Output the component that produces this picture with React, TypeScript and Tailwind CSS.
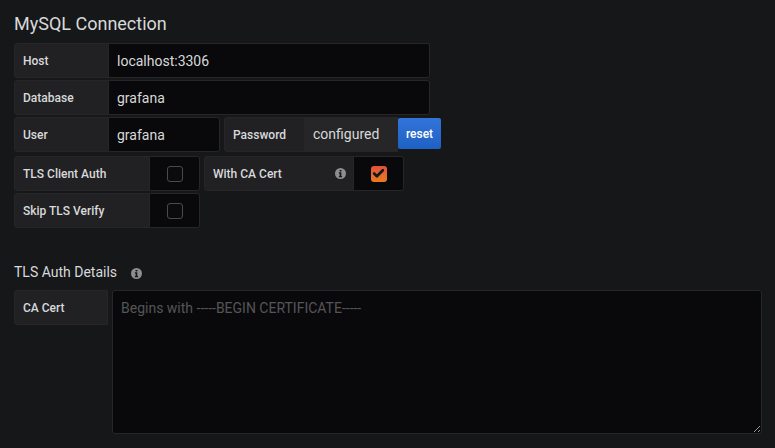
import React from 'react';
import { Check } from 'lucide-react';

const InfoIcon = () => (
  <svg viewBox="0 0 1024 1024" className="w-[11px] h-[11px]" fill="#8e8e8e">
    <circle cx="512" cy="512" r="512" />
    <rect x="440" y="180" width="150" height="140" rx="20" fill="#161719" />
    <path d="M360 400h230v340h70v110H360V740h70V510h-70z" fill="#161719" />
  </svg>
);

const Label: React.FC<{ className?: string; children: React.ReactNode }> = ({ className = '', children }) => (
  <div className={`flex items-center h-[35px] pl-[8px] bg-[#212124] border border-[#262628] rounded-l-[3px] text-[12px] font-medium text-[#d8d9da] shrink-0 ${className}`}>
    {children}
  </div>
);

const TextInput: React.FC<{ value: string; className?: string }> = ({ value, className = '' }) => (
  <input
    readOnly
    value={value}
    className={`h-[35px] pl-[8px] bg-[#09090b] border border-l-0 border-[#262628] rounded-r-[3px] text-[14px] text-[#d8d9da] outline-none ${className}`}
  />
);

const CheckBox: React.FC<{ checked?: boolean }> = ({ checked }) => (
  <div className="flex items-center justify-center w-[50px] h-[35px] bg-[#09090b] border border-l-0 border-[#262628] rounded-r-[3px]">
    {checked ? (
      <div className="flex items-center justify-center w-[16px] h-[16px] rounded-[3px] bg-gradient-to-b from-[#e0513a] to-[#eb7b18]">
        <Check className="w-[13px] h-[13px] text-[#161719]" strokeWidth={5} />
      </div>
    ) : (
      <div className="w-[16px] h-[16px] rounded-[3px] bg-[#0b0b0d] border border-[#4a4a4d]" />
    )}
  </div>
);

export default function App() {
  return (
    <div className="w-[775px] h-[448px] overflow-hidden bg-[#161719] pl-[14px] pt-[13px] font-['Roboto',sans-serif]">
      <h3 className="text-[18px] leading-[21px] text-[#d8d9da] mb-[9px]">MySQL Connection</h3>

      <div className="flex flex-col gap-[2px]">
        <div className="flex">
          <Label className="w-[95px]">Host</Label>
          <TextInput value="localhost:3306" className="w-[321px]" />
        </div>
        <div className="flex">
          <Label className="w-[95px]">Database</Label>
          <TextInput value="grafana" className="w-[321px]" />
        </div>
        <div className="flex">
          <Label className="w-[95px]">User</Label>
          <TextInput value="grafana" className="w-[111px]" />
          <Label className="w-[81px] ml-[4px]">Password</Label>
          <div className="flex items-center w-[93px] h-[35px] pl-[8px] bg-[#262628] text-[14px] text-[#d8d9da]">configured</div>
          <button className="w-[43px] h-[31px] mt-[1px] rounded-[2px] bg-gradient-to-b from-[#3274d9] to-[#1f60c4] text-[12px] font-medium text-white">
            reset
          </button>
        </div>
      </div>

      <div className="flex mt-[4px]">
        <Label className="w-[136px]">TLS Client Auth</Label>
        <CheckBox />
        <Label className="w-[150px] ml-[4px]">
          With CA Cert
          <span className="ml-[53px]"><InfoIcon /></span>
        </Label>
        <CheckBox checked />
      </div>
      <div className="flex mt-[2px]">
        <Label className="w-[136px]">Skip TLS Verify</Label>
        <CheckBox />
      </div>

      <div className="flex items-center mt-[35px] h-[18px] text-[14px] text-[#d8d9da]">
        TLS Auth Details
        <span className="ml-[14px] mt-[3px]"><InfoIcon /></span>
      </div>

      <div className="flex items-start mt-[9px]">
        <Label className="w-[94px]">CA Cert</Label>
        <textarea
          readOnly
          placeholder="Begins with -----BEGIN CERTIFICATE-----"
          className="ml-[4px] w-[650px] h-[144px] px-[8px] py-[8px] bg-[#09090b] border border-[#262628] rounded-[3px] text-[14px] leading-[18px] text-[#d8d9da] placeholder:text-[#555557] outline-none"
        />
      </div>
    </div>
  );
}
